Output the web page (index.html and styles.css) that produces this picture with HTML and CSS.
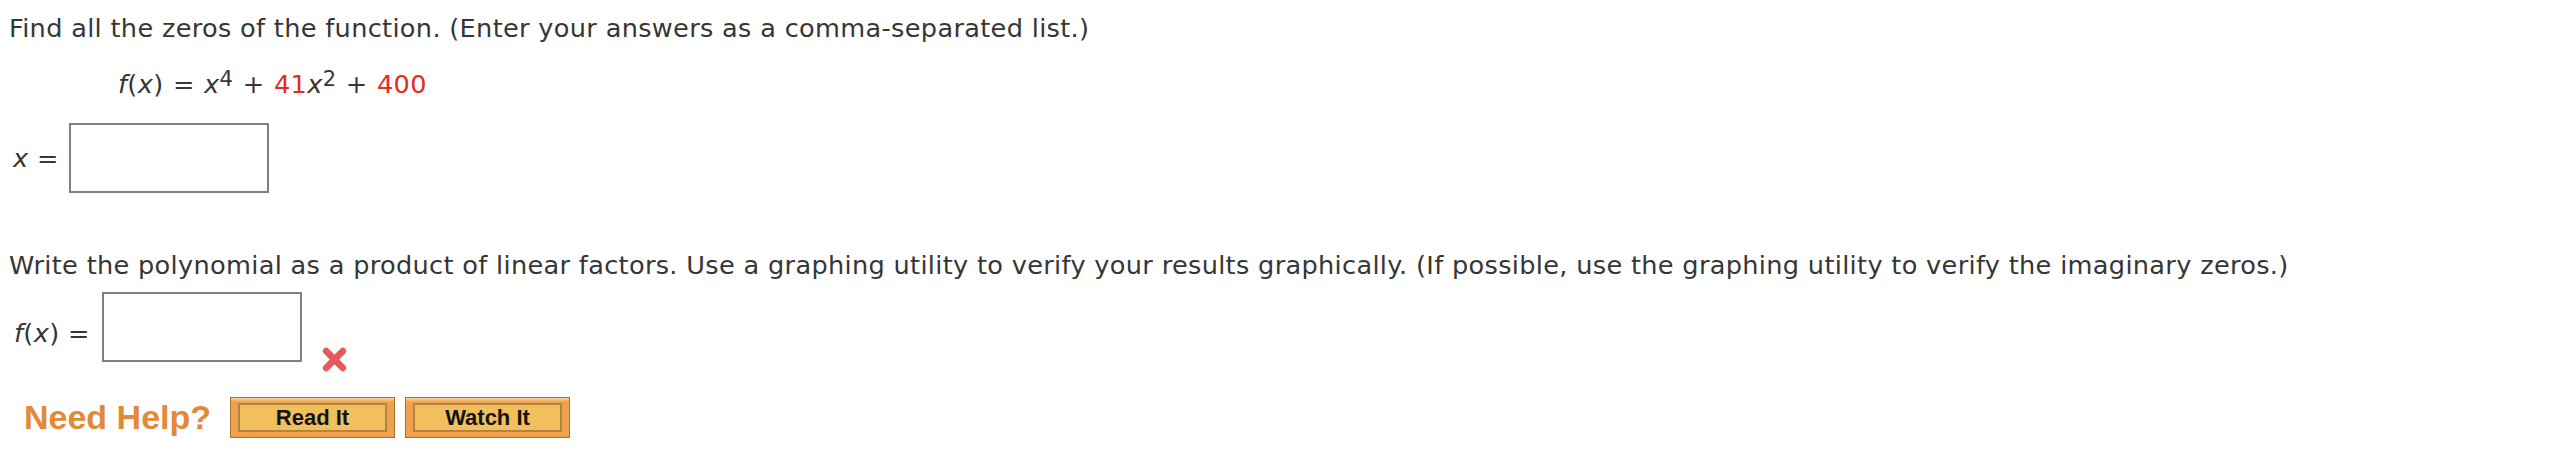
FILE: index.html
```html
<!DOCTYPE html>
<html>
<head>
<meta charset="utf-8">
<link rel="stylesheet" href="styles.css">
</head>
<body>
<div class="page">
  <p class="text">Find all the zeros of the function. (Enter your answers as a comma-separated list.)</p>
  <p class="formula"><span class="var">f</span>(<span class="var">x</span>) = <span class="var">x</span><span class="sup">4</span> + <span class="red">41</span><span class="var">x</span><span class="sup">2</span> + <span class="red">400</span></p>
  <div class="answer-row">
    <span class="label label-x"><span class="var">x</span> =</span>
    <span class="input"></span>
  </div>
  <p class="text text-second">Write the polynomial as a product of linear factors. Use a graphing utility to verify your results graphically. (If possible, use the graphing utility to verify the imaginary zeros.)</p>
  <div class="answer-row answer-row-second">
    <span class="label label-f"><span class="var">f</span>(<span class="var">x</span>) =</span>
    <span class="input"></span>
    <svg class="wrong" width="27" height="27" viewBox="0 0 26 26">
      <path d="M5 5 L21 21 M21 5 L5 21" stroke="#e65a5b" stroke-width="6.5" stroke-linecap="round" fill="none"/>
    </svg>
  </div>
  <div class="help-row">
    <span class="need-help">Need Help?</span>
    <span class="btn"><span class="btn-inner">Read It</span></span>
    <span class="btn"><span class="btn-inner">Watch It</span></span>
  </div>
</div>
</body>
</html>
```
FILE: styles.css
```css
html, body {
  margin: 0;
  padding: 0;
  background: #ffffff;
}

.page {
  padding: 13px 0 0 9px;
  font-family: "DejaVu Sans", Verdana, sans-serif;
  font-size: 25.6px;
  letter-spacing: 0.32px;
  color: #363636;
}

.text {
  margin: 0;
  line-height: 30px;
  white-space: nowrap;
}

.formula {
  margin: 26px 0 0 109px;
  line-height: 30px;
  white-space: nowrap;
  word-spacing: 1px;
}

.var {
  font-style: italic;
}

.red {
  color: #e42c1f;
}

.sup {
  font-size: 21px;
  line-height: 0;
  vertical-align: 7px;
}

.answer-row {
  display: flex;
  align-items: center;
  margin-top: 24px;
}

.label {
  box-sizing: border-box;
  padding-left: 4px;
  line-height: 30px;
  white-space: nowrap;
}

.label-x {
  width: 60px;
}

.label-f {
  width: 93px;
  padding-left: 5px;
}

.input {
  box-sizing: border-box;
  width: 200px;
  height: 70px;
  border: 2px solid #808080;
  background: #ffffff;
}

.text-second {
  margin-top: 57px;
}

.answer-row-second {
  margin-top: 12px;
  align-items: flex-start;
}

.answer-row-second .label {
  align-self: center;
}

.wrong {
  margin: 54px 0 0 19px;
  filter: blur(0.4px);
}

.help-row {
  display: flex;
  align-items: center;
  gap: 10px;
  margin-top: 24px;
  letter-spacing: 0;
}

.need-help {
  box-sizing: border-box;
  width: 206px;
  margin-left: 15px;
  margin-right: -10px;
  font-family: "Liberation Sans", Arial, sans-serif;
  font-weight: bold;
  font-size: 34px;
  line-height: 41px;
  color: #e38a39;
}

.btn {
  box-sizing: border-box;
  display: flex;
  width: 165px;
  height: 41px;
  padding: 5px 7px;
  border: 1px solid #a9712f;
  background: linear-gradient(#f7d7a8 0px, #efa24c 4px, #efa04a 100%);
}

.btn-inner {
  box-sizing: border-box;
  flex: 1;
  display: flex;
  align-items: center;
  justify-content: center;
  border: 2px solid #b08445;
  background: #f2bf5d;
  font-family: "Liberation Sans", Arial, sans-serif;
  font-weight: bold;
  font-size: 22px;
  color: #141414;
}
```
